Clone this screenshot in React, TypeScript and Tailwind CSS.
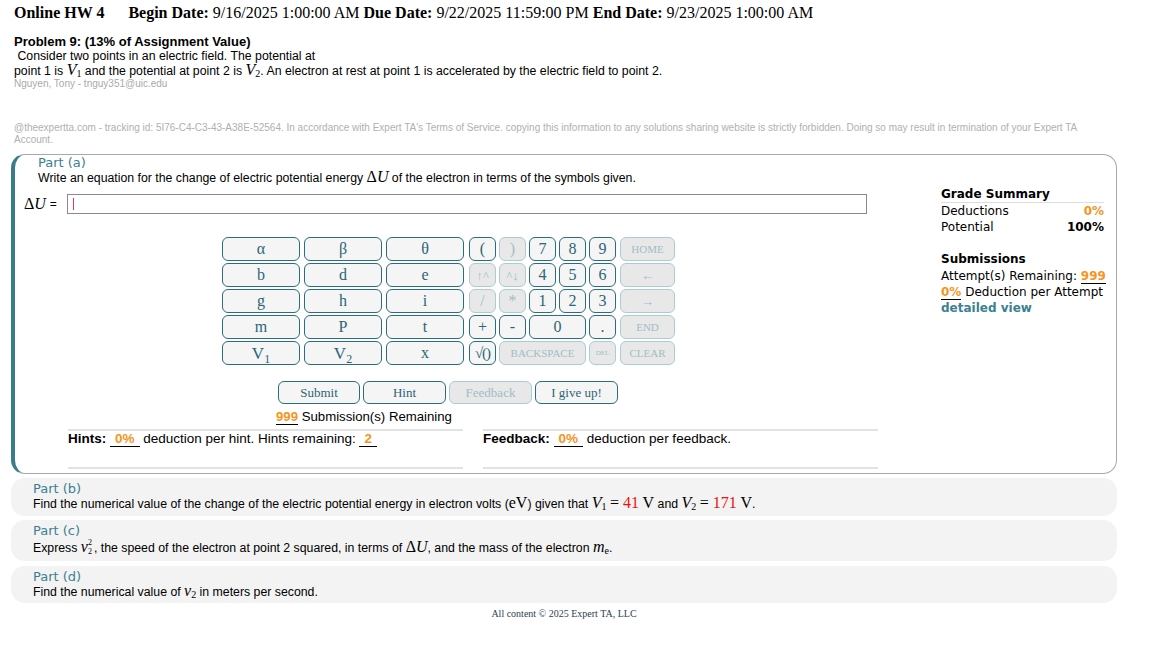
import React from "react";

const SERIF = "font-['Liberation_Serif','Times_New_Roman',serif]";
const MATH = `${SERIF} text-[16px] inline-block h-[14px] leading-[14px]`;

function Sub({ children }: { children: React.ReactNode }) {
  return <span className="relative top-[2px] text-[10px] not-italic leading-[0px]">{children}</span>;
}

function MV({ n }: { n: string }) {
  return (
    <span className={`${MATH} italic`}>
      V<Sub>{n}</Sub>
    </span>
  );
}

function DU() {
  return (
    <span className={MATH}>
      Δ<span className="italic">U</span>
    </span>
  );
}

type K = { l: React.ReactNode; w: string; ml: string; d?: boolean; t?: string };

const EN = "border-[#2a6d7e] bg-[#f5f5f5] text-[#2b6676]";
const DIS = "border-[#a9ccd5] bg-[#e8e8e8] text-[#9fbec6]";

const V1 = (
  <span className="text-[17px]">
    V<span className="relative top-[4px] text-[12px] leading-none">1</span>
  </span>
);
const V2 = (
  <span className="text-[17px]">
    V<span className="relative top-[4px] text-[12px] leading-none">2</span>
  </span>
);

const rows: K[][] = [
  [
    { l: "α", w: "w-[78px]", ml: "ml-0" },
    { l: "β", w: "w-[78px]", ml: "ml-[4px]" },
    { l: "θ", w: "w-[78px]", ml: "ml-[4px]" },
    { l: "(", w: "w-[27px]", ml: "ml-[5px]" },
    { l: ")", w: "w-[27px]", ml: "ml-[3px]", d: true },
    { l: "7", w: "w-[27px]", ml: "ml-[3px]" },
    { l: "8", w: "w-[27px]", ml: "ml-[3px]" },
    { l: "9", w: "w-[27px]", ml: "ml-[3px]" },
    { l: "HOME", w: "w-[55px]", ml: "ml-[4px]", d: true, t: "text-[11px]" },
  ],
  [
    { l: "b", w: "w-[78px]", ml: "ml-0" },
    { l: "d", w: "w-[78px]", ml: "ml-[4px]" },
    { l: "e", w: "w-[78px]", ml: "ml-[4px]" },
    { l: "↑^", w: "w-[27px]", ml: "ml-[5px]", d: true, t: "text-[13px]" },
    { l: "^↓", w: "w-[27px]", ml: "ml-[3px]", d: true, t: "text-[13px]" },
    { l: "4", w: "w-[27px]", ml: "ml-[3px]" },
    { l: "5", w: "w-[27px]", ml: "ml-[3px]" },
    { l: "6", w: "w-[27px]", ml: "ml-[3px]" },
    { l: "←", w: "w-[55px]", ml: "ml-[4px]", d: true, t: "text-[13px]" },
  ],
  [
    { l: "g", w: "w-[78px]", ml: "ml-0" },
    { l: "h", w: "w-[78px]", ml: "ml-[4px]" },
    { l: "i", w: "w-[78px]", ml: "ml-[4px]" },
    { l: "/", w: "w-[27px]", ml: "ml-[5px]", d: true },
    { l: "*", w: "w-[27px]", ml: "ml-[3px]", d: true },
    { l: "1", w: "w-[27px]", ml: "ml-[3px]" },
    { l: "2", w: "w-[27px]", ml: "ml-[3px]" },
    { l: "3", w: "w-[27px]", ml: "ml-[3px]" },
    { l: "→", w: "w-[55px]", ml: "ml-[4px]", d: true, t: "text-[13px]" },
  ],
  [
    { l: "m", w: "w-[78px]", ml: "ml-0" },
    { l: "P", w: "w-[78px]", ml: "ml-[4px]" },
    { l: "t", w: "w-[78px]", ml: "ml-[4px]" },
    { l: "+", w: "w-[27px]", ml: "ml-[5px]" },
    { l: "-", w: "w-[27px]", ml: "ml-[3px]" },
    { l: "0", w: "w-[57px]", ml: "ml-[3px]" },
    { l: ".", w: "w-[27px]", ml: "ml-[3px]" },
    { l: "END", w: "w-[55px]", ml: "ml-[4px]", d: true, t: "text-[11px]" },
  ],
  [
    { l: V1, w: "w-[78px]", ml: "ml-0" },
    { l: V2, w: "w-[78px]", ml: "ml-[4px]" },
    { l: "x", w: "w-[78px]", ml: "ml-[4px]" },
    { l: "√()", w: "w-[27px]", ml: "ml-[5px]", t: "text-[15px] tracking-[-1px]" },
    { l: "BACKSPACE", w: "w-[87px]", ml: "ml-[3px]", d: true, t: "text-[11px]" },
    { l: "DEL", w: "w-[27px]", ml: "ml-[3px]", d: true, t: "text-[7px]" },
    { l: "CLEAR", w: "w-[55px]", ml: "ml-[4px]", d: true, t: "text-[11px]" },
  ],
];

function Key({ k }: { k: K }) {
  return (
    <div
      className={`${k.w} ${k.ml} h-[24px] rounded-[6px] border-[1.5px] flex items-center justify-center ${SERIF} ${
        k.t ?? "text-[16px]"
      } leading-none ${k.d ? DIS : EN}`}
    >
      {k.l}
    </div>
  );
}

function Btn({ label, w, ml, d }: { label: string; w: string; ml: string; d?: boolean }) {
  return (
    <div
      className={`${w} ${ml} h-[23px] rounded-[6px] border-[1.5px] flex items-center justify-center ${SERIF} text-[13px] ${
        d ? DIS : EN
      }`}
    >
      {label}
    </div>
  );
}

function UL({ children }: { children: React.ReactNode }) {
  return <span className="border-b border-black text-[#f7941d] font-bold px-[5px]">{children}</span>;
}

const LABEL = "font-['DejaVu_Sans',sans-serif] text-[13px] leading-[14px] h-[14px] text-[#3b8190]";

export default function App() {
  return (
    <div className="w-[1151px] min-h-[647px] bg-white text-black font-['Liberation_Sans',Arial,sans-serif] text-[12.3px] pl-[11px]">
      {/* Header */}
      <div className={`${SERIF} text-[16px] leading-[18px] pt-[4px] pl-[3px] whitespace-nowrap`}>
        <b>Online HW 4</b>
        <span className="ml-[24px]">
          <b>Begin Date:</b> 9/16/2025 1:00:00 AM <b>Due Date:</b> 9/22/2025 11:59:00 PM <b>End Date:</b>{" "}
          9/23/2025 1:00:00 AM
        </span>
      </div>

      {/* Problem */}
      <div className="mt-[13px] pl-[3px] leading-[14px]">
        <div className="font-bold text-[13px] h-[14px]">Problem 9: (13% of Assignment Value)</div>
        <div className="h-[14px]">&nbsp;Consider two points in an electric field. The potential at</div>
        <div className="h-[14px]">
          point 1 is <MV n="1" /> and the potential at point 2 is <MV n="2" />. An electron at rest at point 1 is
          accelerated by the electric field to point 2.
        </div>
        <div className="mt-[1px] text-[10px] leading-[12px] text-[#aaaaaa]">Nguyen, Tony - tnguy351@uic.edu</div>
      </div>

      <div className="mt-[32px] pl-[3px] text-[10px] leading-[12px] text-[#b0b0b0]">
        @theexpertta.com - tracking id: 5I76-C4-C3-43-A38E-52564. In accordance with Expert TA&apos;s Terms of Service.
        copying this information to any solutions sharing website is strictly forbidden. Doing so may result in
        termination of your Expert TA
        <br />
        Account.
      </div>

      {/* Part (a) */}
      <div className="mt-[8px] w-[1106px] h-[320px] border border-[#a8a8a8] border-l-[4px] border-l-[#3a7c8a] rounded-[14px] flex">
        <div className="flex-1 flex flex-col">
          <div className="pl-[23px] pt-[1px]">
            <div className={LABEL}>Part (a)</div>
            <div className="leading-[14px] h-[14px]">
              Write an equation for the change of electric potential energy <DU /> of the electron in terms of the
              symbols given.
            </div>
          </div>
          <div className="mt-[10px] pl-[9px] flex items-center">
            <div className="w-[43px] flex items-center">
              <span className={`${SERIF} text-[16px] leading-none`}>
                Δ<span className="italic">U</span>
              </span>
              <span className="ml-[4px] text-[12px]">=</span>
            </div>
            <div className="w-[800px] h-[20px] border border-[#8a8a8a] bg-white flex items-center pl-[5px]">
              <div className="w-[1px] h-[12px] bg-[#e8336d]" />
            </div>
          </div>

          {/* keypad */}
          <div className="mt-[23px] ml-[207px] flex flex-col gap-[2px]">
            {rows.map((r, i) => (
              <div key={i} className="flex">
                {r.map((k, j) => (
                  <Key key={j} k={k} />
                ))}
              </div>
            ))}
          </div>

          <div className="mt-[16px] ml-[263px] flex">
            <Btn label="Submit" w="w-[82px]" ml="ml-0" />
            <Btn label="Hint" w="w-[83px]" ml="ml-[3px]" />
            <Btn label="Feedback" w="w-[83px]" ml="ml-[3px]" d />
            <Btn label="I give up!" w="w-[83px]" ml="ml-[3px]" />
          </div>

          <div className="mt-[6px] ml-[261px] leading-[14px] text-[13.2px]">
            <span className="border-b border-black text-[#f7941d] font-bold">999</span> Submission(s) Remaining
          </div>

          <div className="mt-[5px] ml-[53px] flex gap-[20px] text-[13.5px]">
            <div className="w-[395px] h-[40px] border-t-2 border-b-2 border-[#e2e2e2] pt-[1px] leading-[14px]">
              <b>Hints:</b> <UL>0%</UL> deduction per hint. Hints remaining: <UL>2</UL>
            </div>
            <div className="w-[395px] h-[40px] border-t-2 border-b-2 border-[#e2e2e2] pt-[1px] leading-[14px]">
              <b>Feedback:</b> <UL>0%</UL> deduction per feedback.
            </div>
          </div>
        </div>

        {/* Grade summary */}
        <div className="w-[163px] mr-[12px] mt-[31px] font-['DejaVu_Sans',sans-serif] text-[12px] leading-[16px]">
          <div className="font-bold border-b border-[#dddddd]">Grade Summary</div>
          <div className="flex justify-between">
            <span>Deductions</span>
            <span className="font-bold text-[#f7941d]">0%</span>
          </div>
          <div className="flex justify-between">
            <span>Potential</span>
            <span className="font-bold">100%</span>
          </div>
          <div className="mt-[16px] font-bold">Submissions</div>
          <div className="mt-[1px] whitespace-nowrap">
            Attempt(s) Remaining:{" "}
            <span className="font-bold text-[#f7941d] border-b border-black leading-[15px]">999</span>
          </div>
          <div className="whitespace-nowrap">
            <span className="font-bold text-[#f7941d] border-b border-black">0%</span> Deduction per Attempt
          </div>
          <div className="font-bold text-[#3b8190]">detailed view</div>
        </div>
      </div>

      {/* Part (b) */}
      <div className="mt-[4px] w-[1106px] h-[38px] bg-[#f3f3f3] rounded-[14px] pl-[22px] pt-[4px]">
        <div className={LABEL}>Part (b)</div>
        <div className="leading-[14px] h-[14px]">
          Find the numerical value of the change of the electric potential energy in electron volts (
          <span className={MATH}>eV</span>) given that <MV n="1" />{" "}
          <span className={MATH}>
            = <span className="text-[#ee1111]">41</span> V
          </span>{" "}
          and <MV n="2" />{" "}
          <span className={MATH}>
            = <span className="text-[#ee1111]">171</span> V
          </span>
          .
        </div>
      </div>

      {/* Part (c) */}
      <div className="mt-[4px] w-[1106px] h-[41px] bg-[#f3f3f3] rounded-[14px] pl-[22px] pt-[4px]">
        <div className={LABEL}>Part (c)</div>
        <div className="leading-[14px] h-[14px] mt-[2px]">
          Express <span className={`${MATH} italic`}>v</span>
          <span className={`${SERIF} relative inline-block w-[6px] h-[1px]`}>
            <span className="absolute left-0 bottom-[5px] text-[8px] leading-[8px]">2</span>
            <span className="absolute left-0 top-[-3px] text-[8px] leading-[8px]">2</span>
          </span>
          , the speed of the electron at point 2 squared, in terms of <DU />, and the mass of the electron{" "}
          <span className={`${MATH} italic`}>
            m<Sub>e</Sub>
          </span>
          .
        </div>
      </div>

      {/* Part (d) */}
      <div className="mt-[5px] w-[1106px] h-[37px] bg-[#f3f3f3] rounded-[14px] pl-[22px] pt-[4px]">
        <div className={LABEL}>Part (d)</div>
        <div className="leading-[14px] h-[14px]">
          Find the numerical value of{" "}
          <span className={`${MATH} italic`}>
            v<Sub>2</Sub>
          </span>{" "}
          in meters per second.
        </div>
      </div>

      <div className={`w-[1106px] mt-[5px] text-center ${SERIF} text-[10px] leading-[12px] text-[#2c3e50]`}>
        All content © 2025 Expert TA, LLC
      </div>
    </div>
  );
}
